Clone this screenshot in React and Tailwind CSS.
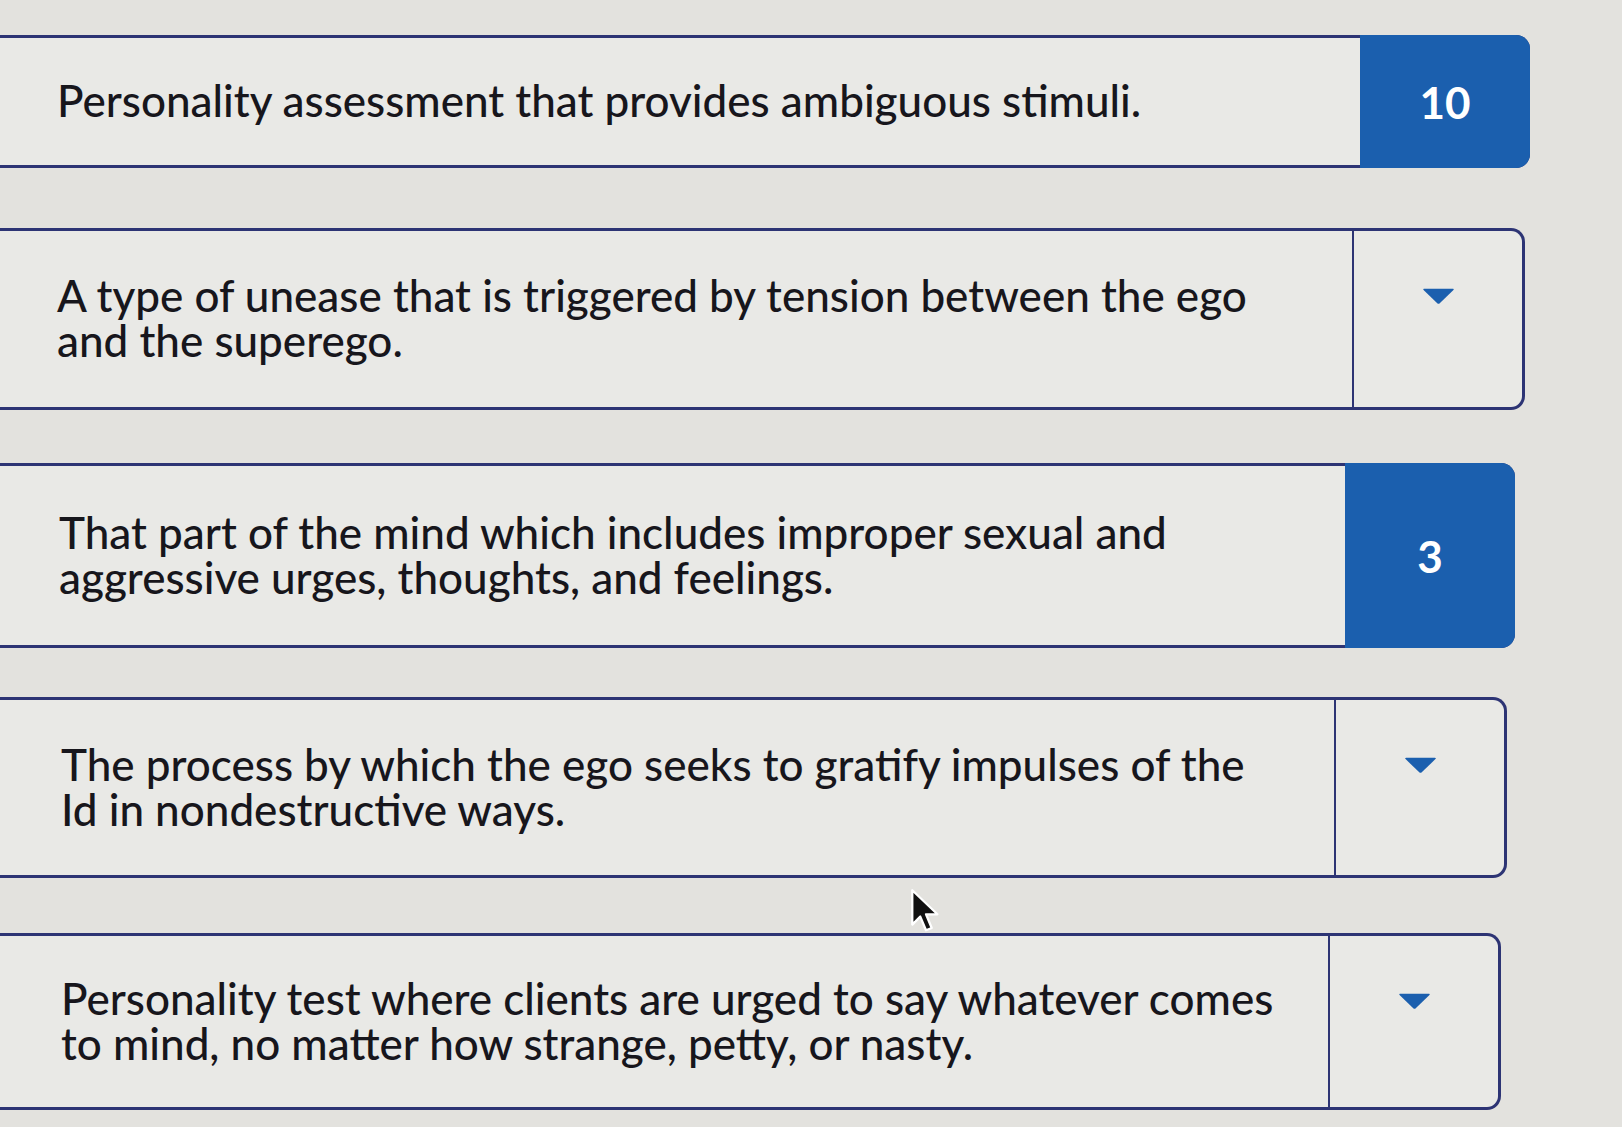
import React from "react";

const rows = [
  { text: ["Personality assessment that provides ambiguous stimuli."], answer: "10", h: "h-[133px]", w: "w-[1530px]", mt: "mt-[35px]", pl: "pl-[57px]" },
  { text: ["A type of unease that is triggered by tension between the ego", "and the superego."], h: "h-[182px]", w: "w-[1525px]", mt: "mt-[60px]", pl: "pl-[57px]" },
  { text: ["That part of the mind which includes improper sexual and", "aggressive urges, thoughts, and feelings."], answer: "3", h: "h-[185px]", w: "w-[1515px]", mt: "mt-[53px]", pl: "pl-[59px]" },
  { text: ["The process by which the ego seeks to gratify impulses of the", "Id in nondestructive ways."], h: "h-[181px]", w: "w-[1507px]", mt: "mt-[49px]", pl: "pl-[61px]" },
  { text: ["Personality test where clients are urged to say whatever comes", "to mind, no matter how strange, petty, or nasty."], h: "h-[177px]", w: "w-[1501px]", mt: "mt-[55px]", pl: "pl-[61px]" },
];

const Caret = () => (
  <svg width="33" height="18" viewBox="0 0 32 17">
    <path d="M2 1.5 L30 1.5 Q31.5 1.5 30.5 2.8 L17.2 15.6 Q16 16.6 14.8 15.6 L1.5 2.8 Q0.5 1.5 2 1.5 Z" fill="#1b5fae" />
  </svg>
);

const Row = ({ row }) => (
  <div className={`${row.mt} ${row.w} ${row.h} flex border-y-[3px] border-r-[3px] border-[#2d3474] rounded-r-[14px] bg-[#e9e9e6]`}>
    <div className={`flex-1 flex items-center ${row.pl} pb-[2px]`}>
      <p className="whitespace-nowrap text-[44px] leading-[45px] font-medium text-[#17161c]">
        {row.text[0]}
        {row.text[1] && (
          <>
            <br />
            {row.text[1]}
          </>
        )}
      </p>
    </div>
    {row.answer ? (
      <div className="w-[170px] -my-[3px] -mr-[3px] bg-[#1b5fae] rounded-r-[14px] flex items-center justify-center text-white text-[44px] font-bold">
        {row.answer}
      </div>
    ) : (
      <div className="w-[170px] border-l-[2px] border-[#2d3474] flex justify-center pt-[56px]">
        <Caret />
      </div>
    )}
  </div>
);

export default function App() {
  return (
    <div className="relative w-[1622px] h-[1127px] overflow-hidden bg-[#e3e2de] font-['Lato','Liberation_Sans',sans-serif]">
      {rows.map((r, i) => (
        <Row key={i} row={r} />
      ))}
      {/* mouse pointer */}
      <svg className="absolute left-[910px] top-[888px]" width="32" height="48" viewBox="0 0 28 42">
        <path d="M2 2 L2 32 L9 25 L14 37 L19 35 L14 23 L24 23 Z" fill="#111" stroke="#fff" strokeWidth="2" strokeLinejoin="round" />
      </svg>
    </div>
  );
}
